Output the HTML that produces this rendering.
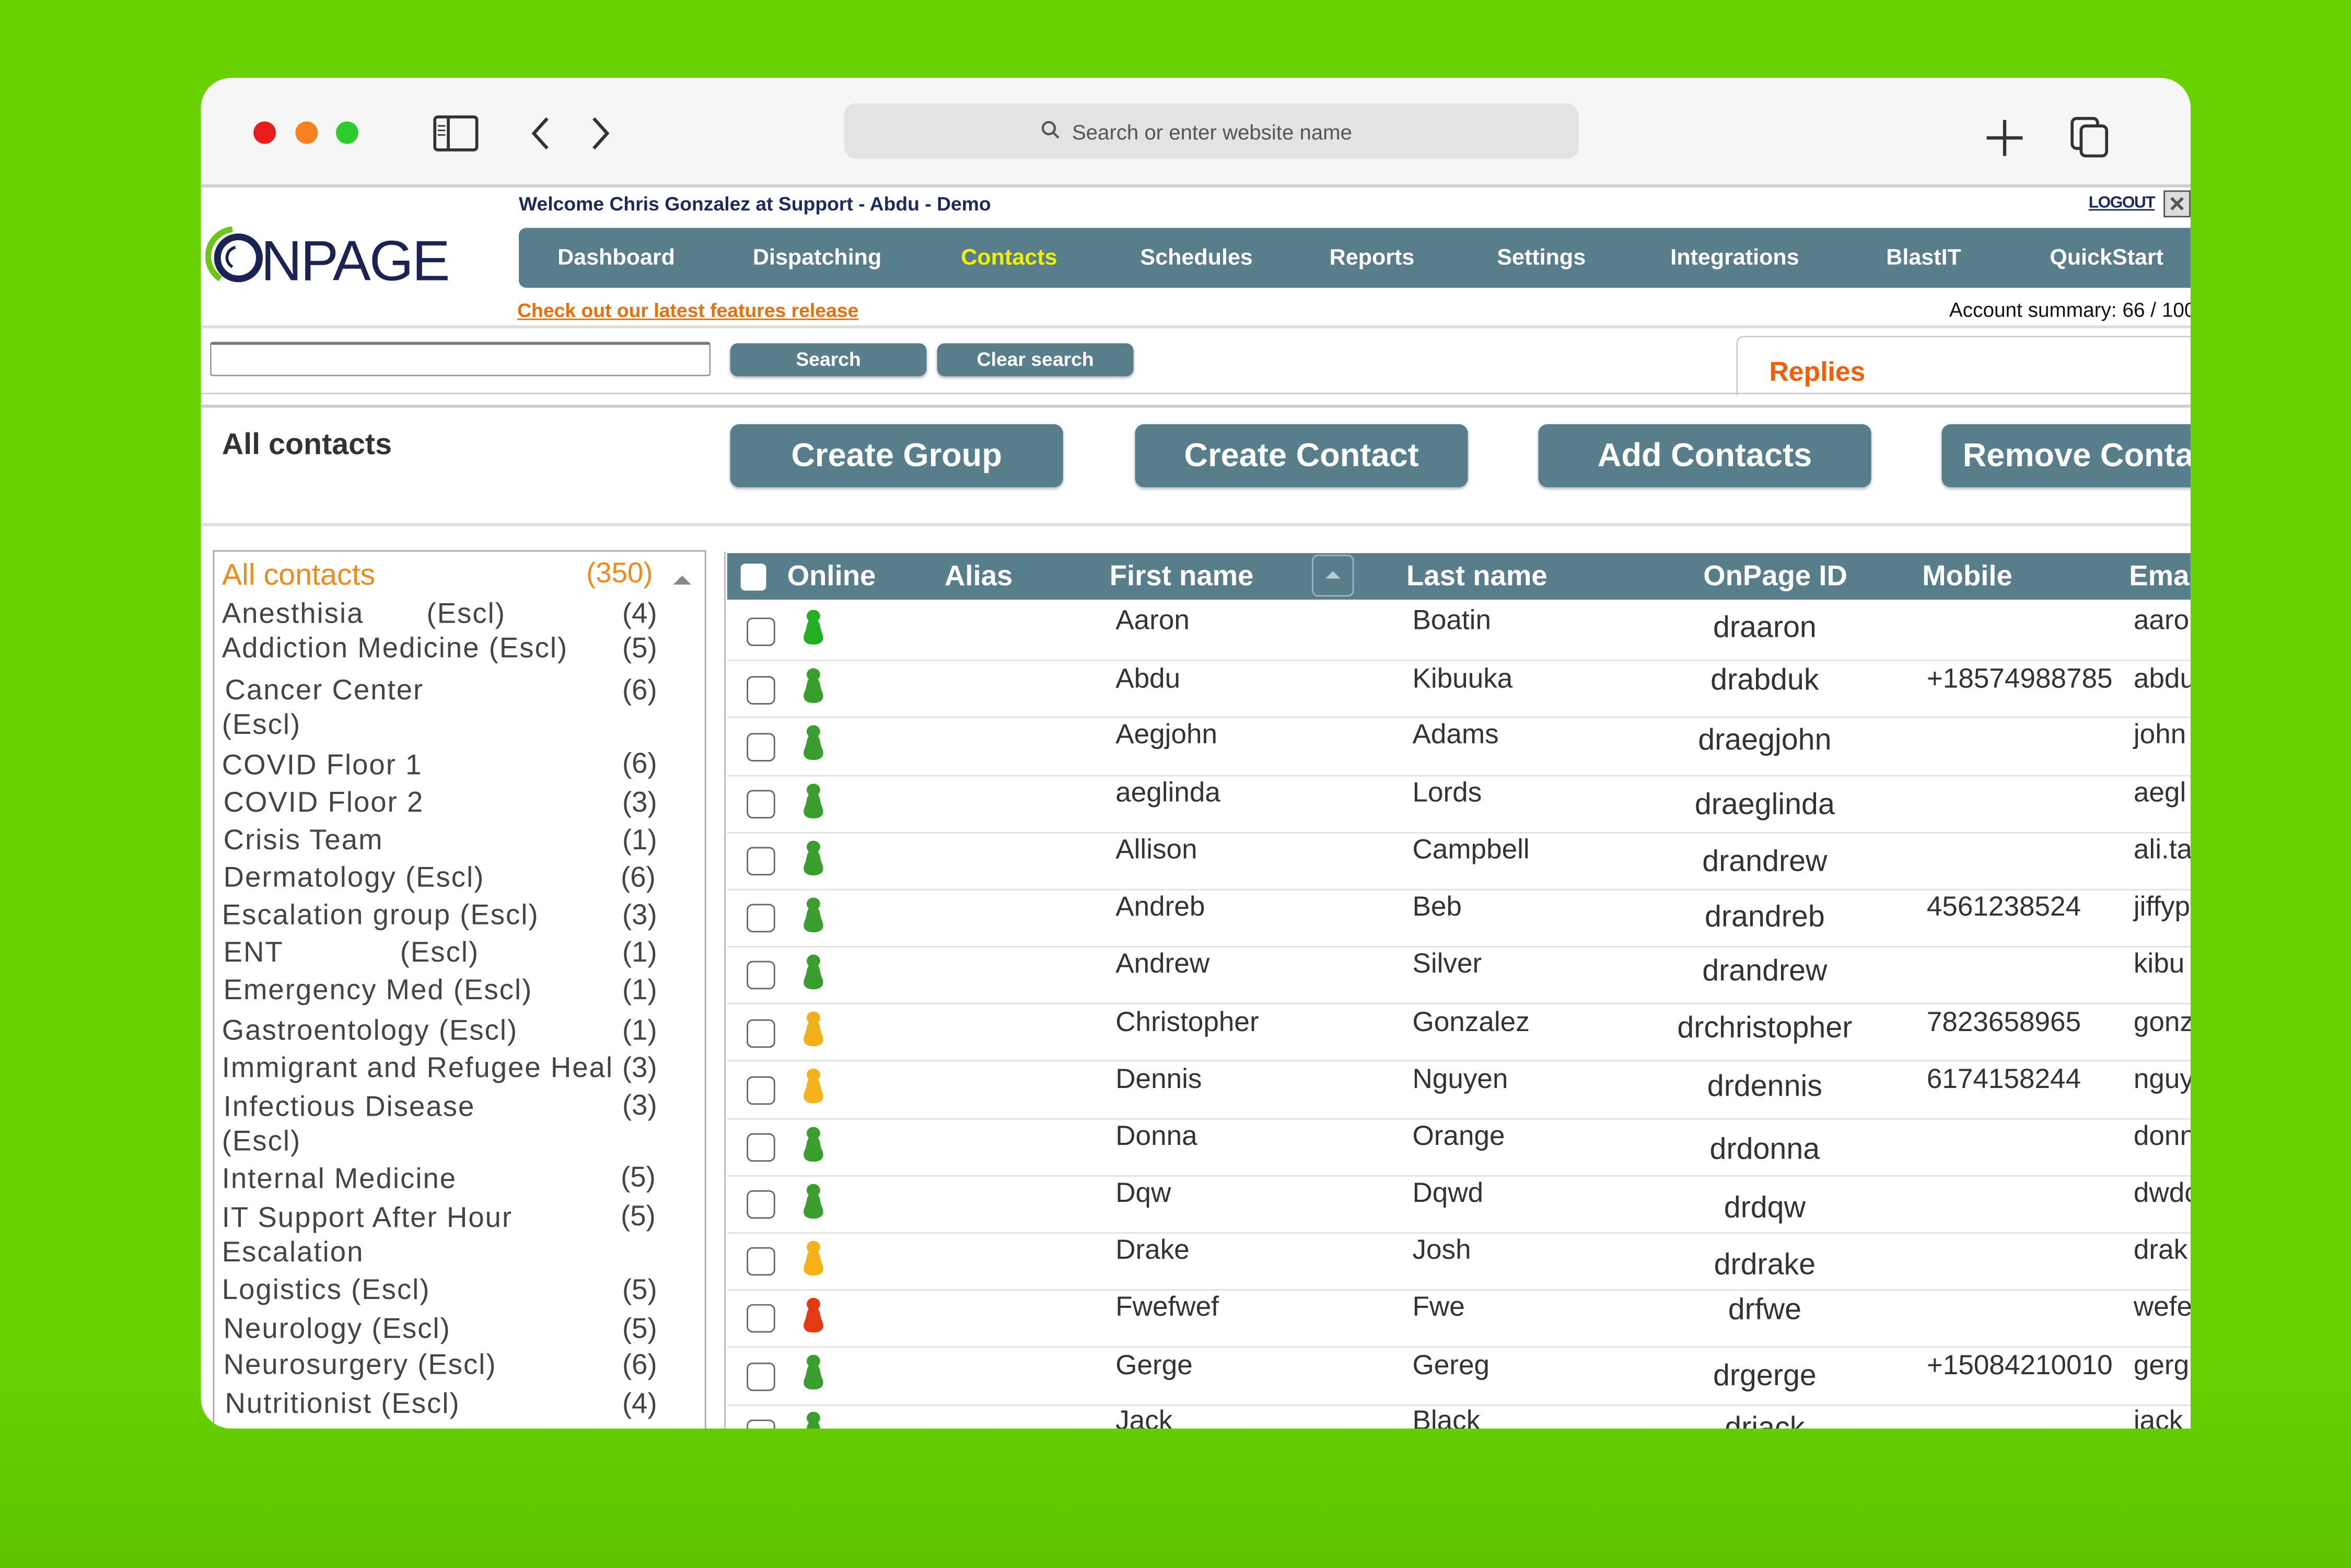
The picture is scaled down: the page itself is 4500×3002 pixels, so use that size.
<!DOCTYPE html>
<html><head><meta charset="utf-8">
<style>
*{margin:0;padding:0;box-sizing:border-box}
html,body{width:4500px;height:3000px;overflow:hidden;background:#66cf00}
#s{position:absolute;left:0;top:0;width:1568px;height:1046px;transform:scale(2.86990);transform-origin:0 0;font-family:"Liberation Sans",sans-serif;background:linear-gradient(#67d200 0,#67d200 900px,#5fc400 1046px)}
.a{position:absolute}
.t{position:absolute;white-space:nowrap;transform:translateY(-50%);line-height:1}
#win{position:absolute;left:134px;top:52px;width:1327px;height:901px;background:#fff;border-radius:20px 20px 0 20px;overflow:hidden}
.nav{color:#fff;font-weight:bold;font-size:15px;font-family:"Liberation Sans Narrow","Liberation Sans",sans-serif;transform:translate(-50%,-50%)}
.btn{position:absolute;background:#587d8b;border-radius:5px;color:#fff;font-weight:bold;text-align:center;box-shadow:0 1px 2px rgba(0,0,0,.3)}
.big{top:231px;height:42px;width:222px;font-size:22px;line-height:42px;border-radius:6px}
.gl{font-size:19px;color:#444;letter-spacing:.7px}
.cn{font-size:19px;color:#444;right:1030px}
.td{font-size:18.5px;color:#333}
.id{font-size:20px;color:#333;transform:translate(-50%,-50%)}
.cb{position:absolute;left:364px;width:19px;height:19px;border:1.5px solid #666;border-radius:4px;background:#fff}
.sep{position:absolute;left:351px;width:976px;height:1px;background:#e2e2e2}
.hd{font-size:19px;color:#fff;font-weight:bold}
svg.pp{width:15px;height:24px;margin-left:-1px}
</style></head><body><div id="s">
<div id="win">
<div class="a" style="left:0;top:0;width:1327px;height:73px;background:#f6f6f6;border-bottom:2px solid #d0d0d0"></div>
<div class="a" style="left:35px;top:29px;width:15px;height:15px;border-radius:50%;background:#e81c1c"></div>
<div class="a" style="left:63px;top:29px;width:15px;height:15px;border-radius:50%;background:#f5821f"></div>
<div class="a" style="left:90px;top:29px;width:15px;height:15px;border-radius:50%;background:#2ccc2c"></div>
<svg class="a" style="left:154px;top:24px" width="32" height="26" viewBox="0 0 32 26"><rect x="2" y="2" width="28" height="22" rx="2" fill="none" stroke="#333" stroke-width="2"/><line x1="11" y1="2" x2="11" y2="24" stroke="#333" stroke-width="2"/><path d="M4 8h5M4 11h5M4 14h5" stroke="#333" stroke-width="1"/></svg>
<svg class="a" style="left:216px;top:24px" width="60" height="26" viewBox="0 0 60 26"><path d="M15 3 L6 13 L15 23" fill="none" stroke="#333" stroke-width="2.2"/><path d="M46 3 L55 13 L46 23" fill="none" stroke="#333" stroke-width="2.2"/></svg>
<div class="a" style="left:429px;top:17px;width:490px;height:37px;background:#e3e3e3;border-radius:8px"></div>
<svg class="a" style="left:560px;top:28px" width="14" height="14" viewBox="0 0 14 14"><circle cx="5.5" cy="5.5" r="4" fill="none" stroke="#555" stroke-width="1.5"/><path d="M8.5 8.5 L12 12" stroke="#555" stroke-width="1.5"/></svg>
<div class="t" style="left:581px;top:36px;font-size:14px;color:#555">Search or enter website name</div>
<svg class="a" style="left:1189px;top:26px" width="28" height="28" viewBox="0 0 28 28"><path d="M14 2V26M2 14H26" stroke="#333" stroke-width="2.2"/></svg>
<svg class="a" style="left:1245px;top:24px" width="30" height="30" viewBox="0 0 30 30"><rect x="3" y="3" width="17" height="20" rx="3" fill="none" stroke="#333" stroke-width="2"/><rect x="9" y="8" width="17" height="20" rx="3" fill="#f6f6f6" stroke="#333" stroke-width="2"/></svg>
<div class="t" style="left:212px;top:84px;font-size:13px;font-weight:bold;color:#1e2a5a">Welcome Chris Gonzalez at Support - Abdu - Demo</div>
<div class="t" style="left:1259px;top:84px;font-size:11px;font-weight:bold;color:#1e2a5a;text-decoration:underline;letter-spacing:-.5px">LOGOUT</div>
<div class="a" style="left:1309px;top:75px;width:18px;height:18px;border:1px solid #555;background:#ddd;color:#555;font-size:14px;font-weight:bold;text-align:center;line-height:16px">✕</div>
<svg class="a" style="left:3px;top:96px" width="170" height="44" viewBox="0 0 170 44"><path d="M10 38 A18 18 0 0 1 18 5" fill="none" stroke="#6dc51a" stroke-width="4"/><circle cx="22" cy="24" r="14" fill="none" stroke="#1b2355" stroke-width="4.5"/><path d="M18 30 A7 7 0 0 1 20 17" fill="none" stroke="#1b2355" stroke-width="2"/><text x="37" y="39" font-family="Liberation Sans" font-size="38" fill="#1b2355" letter-spacing="-1">NPAGE</text></svg>
<div class="a" style="left:212px;top:100px;width:1115px;height:40px;background:#587d8b;border-radius:5px 0 0 5px"></div>
<div class="t nav" style="left:277px;top:120px">Dashboard</div>
<div class="t nav" style="left:411px;top:120px">Dispatching</div>
<div class="t nav" style="left:539px;top:120px;color:#f2f200">Contacts</div>
<div class="t nav" style="left:664px;top:120px">Schedules</div>
<div class="t nav" style="left:781px;top:120px">Reports</div>
<div class="t nav" style="left:894px;top:120px">Settings</div>
<div class="t nav" style="left:1023px;top:120px">Integrations</div>
<div class="t nav" style="left:1149px;top:120px">BlastIT</div>
<div class="t nav" style="left:1271px;top:120px">QuickStart</div>
<div class="t" style="left:211px;top:155px;font-size:13px;font-weight:bold;color:#ea6f0a;text-decoration:underline;font-family:'Liberation Sans Narrow','Liberation Sans',sans-serif">Check out our latest features release</div>
<div class="t" style="left:1166px;top:155px;font-size:13.5px;color:#111">Account summary: 66 / 100</div>
<div class="a" style="left:0;top:165px;width:1327px;height:2px;background:#ddd"></div>
<div class="a" style="left:6px;top:176px;width:334px;height:23px;border:1px solid #999;border-top:2px solid #777;border-radius:2px"></div>
<div class="btn" style="left:353px;top:177px;width:131px;height:22px;line-height:22px;font-size:13px">Search</div>
<div class="btn" style="left:491px;top:177px;width:131px;height:22px;line-height:22px;font-size:13px">Clear search</div>
<div class="a" style="left:1024px;top:172px;width:310px;height:40px;border:1px solid #ccc;border-bottom:none;border-radius:5px 0 0 0"></div>
<div class="t" style="left:1046px;top:196px;font-size:18px;font-weight:bold;color:#f0600a">Replies</div>
<div class="a" style="left:0;top:210px;width:1327px;height:1px;background:#ccc"></div>
<div class="a" style="left:0;top:218px;width:1327px;height:2px;background:#ccc"></div>
<div class="t" style="left:14px;top:245px;font-size:20px;font-weight:bold;color:#333">All contacts</div>
<div class="btn big" style="left:353px">Create Group</div>
<div class="btn big" style="left:623px">Create Contact</div>
<div class="btn big" style="left:892px">Add Contacts</div>
<div class="btn big" style="left:1161px;text-align:left;padding-left:14px;border-radius:6px 0 0 6px">Remove Contacts</div>
<div class="a" style="left:0;top:297px;width:1327px;height:2px;background:#ddd"></div>
<div class="a" style="left:8px;top:315px;width:329px;height:600px;border:1.5px solid #aaa"></div>
<svg class="a" style="left:314px;top:329px" width="14" height="10"><path d="M1 9 L7 3 L13 9Z" fill="#888"/></svg>
<div class="t" style="left:14px;top:332px;font-size:20px;color:#f08a1c">All contacts</div>
<div class="t" style="left:257px;top:331px;font-size:19px;color:#f08a1c">(350)</div>
<div class="t gl" style="left:14px;top:358px">Anesthisia&nbsp;&nbsp;&nbsp;&nbsp;&nbsp;&nbsp;&nbsp;(Escl)</div><div class="t cn" style="left:281px;top:358px">(4)</div>
<div class="t gl" style="left:14px;top:381px">Addiction Medicine (Escl)</div><div class="t cn" style="left:281px;top:381px">(5)</div>
<div class="t gl" style="left:16px;top:409px">Cancer Center</div><div class="t cn" style="left:281px;top:409px">(6)</div>
<div class="t gl" style="left:14px;top:432px">(Escl)</div>
<div class="t gl" style="left:14px;top:459px">COVID Floor 1</div><div class="t cn" style="left:281px;top:458px">(6)</div>
<div class="t gl" style="left:15px;top:484px">COVID Floor 2</div><div class="t cn" style="left:281px;top:484px">(3)</div>
<div class="t gl" style="left:15px;top:509px">Crisis Team</div><div class="t cn" style="left:281px;top:509px">(1)</div>
<div class="t gl" style="left:15px;top:534px">Dermatology (Escl)</div><div class="t cn" style="left:280px;top:534px">(6)</div>
<div class="t gl" style="left:14px;top:559px">Escalation group (Escl)</div><div class="t cn" style="left:281px;top:559px">(3)</div>
<div class="t gl" style="left:15px;top:584px">ENT&nbsp;&nbsp;&nbsp;&nbsp;&nbsp;&nbsp;&nbsp;&nbsp;&nbsp;&nbsp;&nbsp;&nbsp;&nbsp;(Escl)</div><div class="t cn" style="left:281px;top:584px">(1)</div>
<div class="t gl" style="left:15px;top:609px">Emergency Med (Escl)</div><div class="t cn" style="left:281px;top:609px">(1)</div>
<div class="t gl" style="left:14px;top:636px">Gastroentology (Escl)</div><div class="t cn" style="left:281px;top:636px">(1)</div>
<div class="t gl" style="left:14px;top:661px">Immigrant and Refugee Heal</div><div class="t cn" style="left:281px;top:661px">(3)</div>
<div class="t gl" style="left:15px;top:687px">Infectious Disease</div><div class="t cn" style="left:281px;top:686px">(3)</div>
<div class="t gl" style="left:14px;top:710px">(Escl)</div>
<div class="t gl" style="left:14px;top:735px">Internal Medicine</div><div class="t cn" style="left:280px;top:734px">(5)</div>
<div class="t gl" style="left:14px;top:761px">IT Support After Hour</div><div class="t cn" style="left:280px;top:760px">(5)</div>
<div class="t gl" style="left:14px;top:784px">Escalation</div>
<div class="t gl" style="left:14px;top:809px">Logistics (Escl)</div><div class="t cn" style="left:281px;top:809px">(5)</div>
<div class="t gl" style="left:15px;top:835px">Neurology (Escl)</div><div class="t cn" style="left:281px;top:835px">(5)</div>
<div class="t gl" style="left:15px;top:859px">Neurosurgery (Escl)</div><div class="t cn" style="left:281px;top:859px">(6)</div>
<div class="t gl" style="left:16px;top:885px">Nutritionist (Escl)</div><div class="t cn" style="left:281px;top:885px">(4)</div>
<div class="a" style="left:349px;top:316px;width:1px;height:600px;background:#bbb"></div>
<div class="a" style="left:351px;top:317px;width:976px;height:31px;background:#587d8b"></div>
<div class="a" style="left:360px;top:324px;width:17px;height:18px;background:#fff;border-radius:3px"></div>
<div class="t hd" style="left:391px;top:333px">Online</div>
<div class="t hd" style="left:496px;top:333px">Alias</div>
<div class="t hd" style="left:606px;top:333px">First name</div>
<div class="a" style="left:741px;top:318px;width:28px;height:28px;border:1.5px solid #9fb5be;border-radius:4px"></div>
<svg class="a" style="left:749px;top:327px" width="12" height="8"><path d="M1 7L6 2L11 7Z" fill="#b9cbd2"/></svg>
<div class="t hd" style="left:804px;top:333px">Last name</div>
<div class="t hd" style="left:1002px;top:333px">OnPage ID</div>
<div class="t hd" style="left:1148px;top:333px">Mobile</div>
<div class="t hd" style="left:1286px;top:333px">Email</div>
<svg width="0" height="0" style="position:absolute"><defs><symbol id="p" viewBox="0 0 14 24" preserveAspectRatio="none"><circle cx="7" cy="5" r="4.2"/><path d="M7 6 C2 8 3.5 12 1.5 16.5 C-0.5 22 3 24 7 24 C11 24 14.5 22 12.5 16.5 C10.5 12 12 8 7 6Z"/></symbol></defs></svg>
<div class="sep" style="top:388px"></div><div class="sep" style="top:426px"></div><div class="sep" style="top:465px"></div><div class="sep" style="top:503px"></div><div class="sep" style="top:541px"></div><div class="sep" style="top:579px"></div><div class="sep" style="top:617px"></div><div class="sep" style="top:655px"></div><div class="sep" style="top:694px"></div><div class="sep" style="top:732px"></div><div class="sep" style="top:770px"></div><div class="sep" style="top:808px"></div><div class="sep" style="top:846px"></div><div class="sep" style="top:885px"></div>

<div class="cb" style="top:360px"></div><svg class="a pp" style="left:402px;top:354px" fill="#22b022"><use href="#p"/></svg>
<div class="t td" style="left:610px;top:362px">Aaron</div><div class="t td" style="left:808px;top:362px">Boatin</div><div class="t id" style="left:1043px;top:367px">draaron</div><div class="t td" style="left:1289px;top:362px">aaron</div>

<div class="cb" style="top:399px"></div><svg class="a pp" style="left:402px;top:393px" fill="#3a9e2e"><use href="#p"/></svg>
<div class="t td" style="left:610px;top:401px">Abdu</div><div class="t td" style="left:808px;top:401px">Kibuuka</div><div class="t id" style="left:1043px;top:402px">drabduk</div><div class="t td" style="left:1151px;top:401px">+18574988785</div><div class="t td" style="left:1289px;top:401px">abdu</div>

<div class="cb" style="top:437px"></div><svg class="a pp" style="left:402px;top:431px" fill="#3a9e2e"><use href="#p"/></svg>
<div class="t td" style="left:610px;top:438px">Aegjohn</div><div class="t td" style="left:808px;top:438px">Adams</div><div class="t id" style="left:1043px;top:442px">draegjohn</div><div class="t td" style="left:1289px;top:438px">john</div>

<div class="cb" style="top:475px"></div><svg class="a pp" style="left:402px;top:470px" fill="#3a9e2e"><use href="#p"/></svg>
<div class="t td" style="left:610px;top:477px">aeglinda</div><div class="t td" style="left:808px;top:477px">Lords</div><div class="t id" style="left:1043px;top:485px">draeglinda</div><div class="t td" style="left:1289px;top:477px">aegl</div>

<div class="cb" style="top:513px"></div><svg class="a pp" style="left:402px;top:508px" fill="#3a9e2e"><use href="#p"/></svg>
<div class="t td" style="left:610px;top:515px">Allison</div><div class="t td" style="left:808px;top:515px">Campbell</div><div class="t id" style="left:1043px;top:523px">drandrew</div><div class="t td" style="left:1289px;top:515px">ali.ta</div>

<div class="cb" style="top:551px"></div><svg class="a pp" style="left:402px;top:546px" fill="#3a9e2e"><use href="#p"/></svg>
<div class="t td" style="left:610px;top:553px">Andreb</div><div class="t td" style="left:808px;top:553px">Beb</div><div class="t id" style="left:1043px;top:560px">drandreb</div><div class="t td" style="left:1151px;top:553px">4561238524</div><div class="t td" style="left:1289px;top:553px">jiffyp</div>

<div class="cb" style="top:589px"></div><svg class="a pp" style="left:402px;top:584px" fill="#3a9e2e"><use href="#p"/></svg>
<div class="t td" style="left:610px;top:591px">Andrew</div><div class="t td" style="left:808px;top:591px">Silver</div><div class="t id" style="left:1043px;top:596px">drandrew</div><div class="t td" style="left:1289px;top:591px">kibu</div>

<div class="cb" style="top:628px"></div><svg class="a pp" style="left:402px;top:622px" fill="#f0b01a"><use href="#p"/></svg>
<div class="t td" style="left:610px;top:630px">Christopher</div><div class="t td" style="left:808px;top:630px">Gonzalez</div><div class="t id" style="left:1043px;top:634px">drchristopher</div><div class="t td" style="left:1151px;top:630px">7823658965</div><div class="t td" style="left:1289px;top:630px">gonz</div>

<div class="cb" style="top:666px"></div><svg class="a pp" style="left:402px;top:660px" fill="#f5b21a"><use href="#p"/></svg>
<div class="t td" style="left:610px;top:668px">Dennis</div><div class="t td" style="left:808px;top:668px">Nguyen</div><div class="t id" style="left:1043px;top:673px">drdennis</div><div class="t td" style="left:1151px;top:668px">6174158244</div><div class="t td" style="left:1289px;top:668px">nguy</div>

<div class="cb" style="top:704px"></div><svg class="a pp" style="left:402px;top:699px" fill="#3a9e2e"><use href="#p"/></svg>
<div class="t td" style="left:610px;top:706px">Donna</div><div class="t td" style="left:808px;top:706px">Orange</div><div class="t id" style="left:1043px;top:715px">drdonna</div><div class="t td" style="left:1289px;top:706px">donn</div>

<div class="cb" style="top:742px"></div><svg class="a pp" style="left:402px;top:737px" fill="#3a9e2e"><use href="#p"/></svg>
<div class="t td" style="left:610px;top:744px">Dqw</div><div class="t td" style="left:808px;top:744px">Dqwd</div><div class="t id" style="left:1043px;top:754px">drdqw</div><div class="t td" style="left:1289px;top:744px">dwdc</div>

<div class="cb" style="top:780px"></div><svg class="a pp" style="left:402px;top:775px" fill="#f5b21a"><use href="#p"/></svg>
<div class="t td" style="left:610px;top:782px">Drake</div><div class="t td" style="left:808px;top:782px">Josh</div><div class="t id" style="left:1043px;top:792px">drdrake</div><div class="t td" style="left:1289px;top:782px">drak</div>

<div class="cb" style="top:818px"></div><svg class="a pp" style="left:402px;top:813px" fill="#e43a12"><use href="#p"/></svg>
<div class="t td" style="left:610px;top:820px">Fwefwef</div><div class="t td" style="left:808px;top:820px">Fwe</div><div class="t id" style="left:1043px;top:822px">drfwe</div><div class="t td" style="left:1289px;top:820px">wefe</div>

<div class="cb" style="top:857px"></div><svg class="a pp" style="left:402px;top:851px" fill="#3a9e2e"><use href="#p"/></svg>
<div class="t td" style="left:610px;top:859px">Gerge</div><div class="t td" style="left:808px;top:859px">Gereg</div><div class="t id" style="left:1043px;top:866px">drgerge</div><div class="t td" style="left:1151px;top:859px">+15084210010</div><div class="t td" style="left:1289px;top:859px">gerg</div>

<div class="cb" style="top:895px"></div><svg class="a pp" style="left:402px;top:889px" fill="#3a9e2e"><use href="#p"/></svg>
<div class="t td" style="left:610px;top:896px">Jack</div><div class="t td" style="left:808px;top:896px">Black</div><div class="t id" style="left:1043px;top:901px">drjack</div><div class="t td" style="left:1289px;top:896px">jack</div>
</div>
</div></body></html>
